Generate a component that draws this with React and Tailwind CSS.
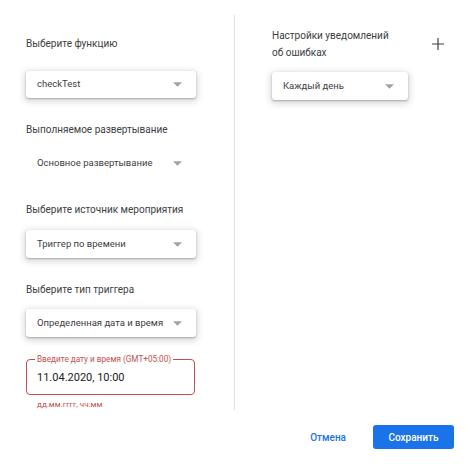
import React from "react";

function Arrow() {
  return (
    <svg width="9" height="5" viewBox="0 0 10 5" className="shrink-0">
      <path d="M0 0 L10 0 L5 5 Z" fill="#a0a4a8" />
    </svg>
  );
}

function Select({ value, flat = false, w = "w-[170px]" }) {
  return (
    <div
      className={`${w} h-[28px] flex items-center justify-between pl-[11px] pr-[14px] rounded-[3px] bg-white text-[9.5px] text-[#3c4043] whitespace-nowrap ${
        flat ? "" : "shadow-[0_1px_2px_rgba(60,64,67,0.35),0_2px_6px_2px_rgba(60,64,67,0.18)]"
      }`}
    >
      <span>{value}</span>
      <Arrow />
    </div>
  );
}

function Label({ children, mb = "mb-[11px]" }) {
  return <div className={`text-[10px] leading-[16px] text-[#3c4043] whitespace-nowrap ${mb}`}>{children}</div>;
}

export default function App() {
  return (
    <div
      className="w-[474px] h-[470px] bg-white relative"
      style={{ fontFamily: "Roboto, 'Noto Sans', sans-serif" }}
    >
      <div className="flex pt-[15px] h-[410px]">
        <div className="w-[234px] pl-[26px] pt-[21px] flex flex-col">
          <Label mb="mb-[19px]">Выберите функцию</Label>
          <Select value="checkTest" />
          <div className="mt-[24px]">
            <Label>Выполняемое развертывание</Label>
            <Select value="Основное развертывание" flat />
          </div>
          <div className="mt-[25px]">
            <Label mb="mb-[12px]">Выберите источник мероприятия</Label>
            <Select value="Триггер по времени" />
          </div>
          <div className="mt-[24px]">
            <Label>Выберите тип триггера</Label>
            <Select value="Определенная дата и время" />
          </div>
          <div className="mt-[22px] relative w-[169px] h-[37px] border border-[#c0504d] rounded-[4px] flex items-center pl-[10px]">
            <span className="absolute left-[8px] top-[-6px] bg-white px-[2px] text-[8.2px] leading-[10px] text-[#c0504d] whitespace-nowrap">
              Введите дату и время (GMT+05:00)
            </span>
            <span className="text-[11px] text-[#202124] mt-[3px]">11.04.2020, 10:00</span>
          </div>
          <div className="pl-[11px] mt-[5px] text-[8px] leading-[10px] text-[#c0504d] whitespace-nowrap">дд.мм.гггг, чч:мм</div>
        </div>
        <div className="w-px bg-[#e0e0e0]" />
        <div className="flex-1 pl-[37px] pt-[12px] pr-[28px]">
          <div className="flex justify-between">
            <div className="text-[10px] leading-[17px] text-[#3c4043]">
              Настройки уведомлений
              <br />
              об ошибках
            </div>
            <svg width="12" height="12" viewBox="0 0 12 12" className="mt-[11px] mr-[2px]">
              <path d="M6 0 V12 M0 6 H12" stroke="#3c4043" strokeWidth="1.2" />
            </svg>
          </div>
          <div className="mt-[11px]">
            <Select value="Каждый день" w="w-[136px]" />
          </div>
        </div>
      </div>
      <div className="flex justify-end items-center pr-[20px] mt-[15px] gap-[11px]">
        <button className="h-[24px] px-[16px] text-[10px] font-medium text-[#1a73e8]">Отмена</button>
        <button className="h-[24px] w-[81px] rounded-[3px] bg-[#1a73e8] text-[10px] font-medium text-white">
          Сохранить
        </button>
      </div>
    </div>
  );
}
